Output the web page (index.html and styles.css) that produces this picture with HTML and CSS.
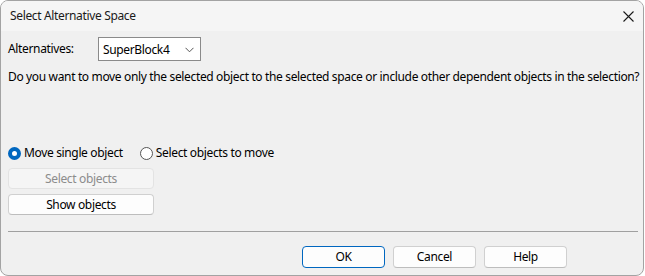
FILE: index.html
```html
<!DOCTYPE html>
<html>
<head>
<meta charset="utf-8">
<link rel="stylesheet" href="styles.css">
</head>
<body>
<div class="window">
  <div class="titlebar">
    <span class="title">Select Alternative Space</span>
    <span class="close">
      <svg width="11" height="11" viewBox="0 0 11 11"><path d="M0.5 0.5 L10.5 10.5 M10.5 0.5 L0.5 10.5" stroke="#1a1a1a" stroke-width="1.1" fill="none"/></svg>
    </span>
  </div>
  <div class="content">
    <div class="alt-row">
      <span class="alt-label">Alternatives:</span>
      <div class="combo">
        <span>SuperBlock4</span>
        <svg class="chev" width="9" height="6" viewBox="0 0 9 6"><path d="M0.5 0.8 L4.5 4.8 L8.5 0.8" stroke="#555" stroke-width="1" fill="none"/></svg>
      </div>
    </div>
    <p class="question">Do you want to move only the selected object to the selected space or include other dependent objects in the selection?</p>
    <div class="radios">
      <label class="radio"><span class="dot on"></span>Move single object</label>
      <label class="radio"><span class="dot"></span>Select objects to move</label>
    </div>
    <div class="btn wide disabled">Select objects</div>
    <div class="btn wide second">Show objects</div>
    <div class="sep"></div>
    <div class="actions">
      <div class="btn act primary">OK</div>
      <div class="btn act">Cancel</div>
      <div class="btn act">Help</div>
    </div>
  </div>
</div>
</body>
</html>
```
FILE: styles.css
```css
* { box-sizing: border-box; }
html, body { margin: 0; padding: 0; background: #ffffff; }
body {
  font-family: "Noto Sans", "Liberation Sans", sans-serif;
  font-size: 12px;
  letter-spacing: -0.35px;
  color: #000;
}
.window {
  width: 644px;
  height: 276px;
  border: 1px solid #a3a3a3;
  border-radius: 8px;
  background: #f0f0f0;
  overflow: hidden;
  display: flex;
  flex-direction: column;
}
.titlebar {
  height: 30px;
  background: #f5f5f5;
  display: flex;
  align-items: center;
  justify-content: space-between;
  padding-left: 9px;
  padding-right: 9px;
  flex-shrink: 0;
}
.title { color: #1a1a1a; line-height: 16px; }
.close { display: flex; width: 11px; height: 11px; margin-top: 1px; }
.content {
  padding: 6px 7px 0 7px;
  display: flex;
  flex-direction: column;
}
.alt-row { display: flex; align-items: center; height: 24px; }
.alt-label { width: 90px; line-height: 16px; }
.combo {
  width: 103px;
  height: 24px;
  border: 1px solid #8a8a8a;
  background: #fff;
  display: flex;
  align-items: center;
  justify-content: space-between;
  padding: 0 6px 0 4px;
}
.chev { margin-top: 1px; }
.question {
  margin: 8px 0 0 0;
  line-height: 16px;
  white-space: nowrap;
}
.radios {
  margin-top: 60px;
  display: flex;
  gap: 17px;
  height: 16px;
  align-items: center;
}
.radio { display: flex; align-items: center; line-height: 16px; }
.dot {
  width: 13px;
  height: 13px;
  border-radius: 50%;
  border: 1px solid #555;
  background: #fff;
  margin-right: 3px;
}
.dot.on {
  border: 4px solid #0067c0;
  background: #fff;
}
.btn {
  display: flex;
  align-items: center;
  justify-content: center;
  background: #fdfdfd;
  border: 1px solid #d0d0d0;
  border-bottom-color: #bdbdbd;
  border-radius: 4px;
  line-height: 16px;
}
.wide { width: 146px; height: 21px; }
.disabled {
  margin-top: 7px;
  background: #f5f5f5;
  border-color: #e3e3e3;
  color: #8c8c8c;
}
.second { margin-top: 5px; }
.sep {
  margin-top: 16px;
  height: 1px;
  background: #a0a0a0;
  width: 630px;
}
.actions {
  margin-top: 14px;
  display: flex;
  justify-content: flex-end;
  gap: 8px;
  padding-right: 69px;
}
.act { width: 83px; height: 22px; }
.primary { border-color: #0067c0; }
```
